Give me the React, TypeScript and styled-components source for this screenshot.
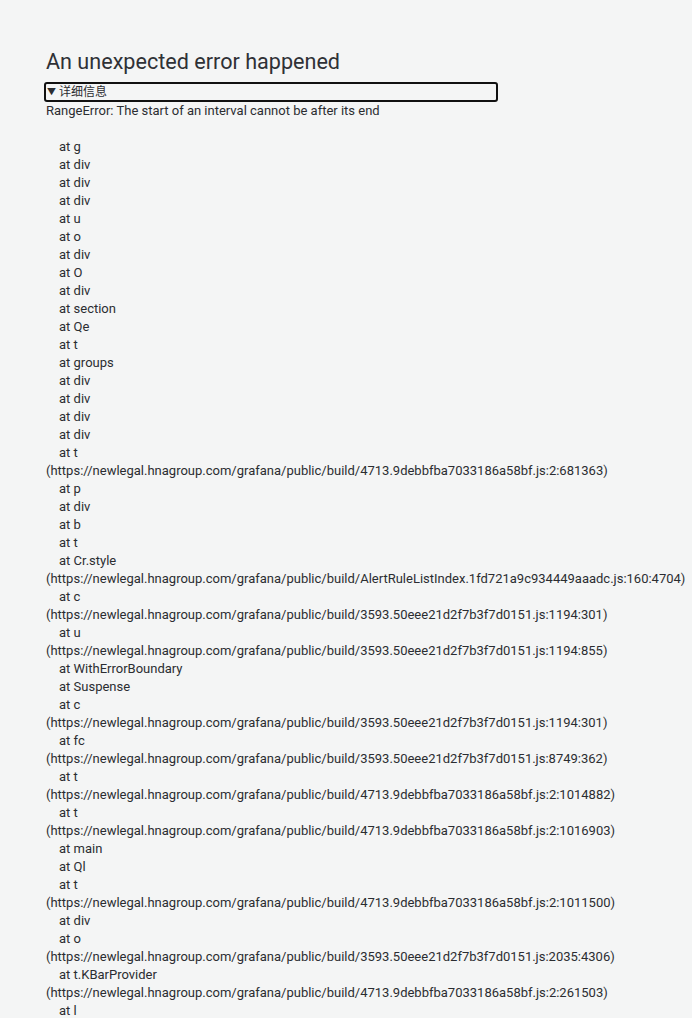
import React from "react";
import styled, { createGlobalStyle } from "styled-components";

const Global = createGlobalStyle`
  html, body { margin: 0; padding: 0; background: #ffffff; }
  body { font-family: Roboto, "Noto Sans CJK SC", sans-serif; }
`;

const Page = styled.div`
  height: 1018px;
  background: #f4f5f5;
  padding: 48px 0 0 46px;
  box-sizing: border-box;
  overflow: hidden;
  color: #2b2d31;
`;

const Title = styled.h2`
  margin: 0 0 6px 0;
  font-size: 21.6px;
  font-weight: 400;
  line-height: 28px;
  color: #2f3136;
`;

const Details = styled.div`
  font-size: 13px;
  line-height: 18px;
  width: 646px;
`;

const Summary = styled.div`
  width: 449px;
  height: 16px;
  line-height: 16px;
  margin-left: -2px;
  padding-left: 1px;
  border: 2px solid #111;
  border-radius: 3px;
  font-size: 12px;
  display: flex;
  align-items: center;
  gap: 3px;
  font-family: Roboto, "Noto Sans CJK SC", sans-serif;
`;

const Tri = styled.span`
  font-size: 9px;
`;

const Line = styled.div<{ $indent?: boolean }>`
  padding-left: ${(p) => (p.$indent ? "13px" : "0")};
  white-space: nowrap;
  height: 18px;
`;

const B = "(https://newlegal.hnagroup.com/grafana/public/build/";

const lines: [string, boolean][] = [
  ["RangeError: The start of an interval cannot be after its end", false],
  ["", false],
  ["at g", true],
  ["at div", true],
  ["at div", true],
  ["at div", true],
  ["at u", true],
  ["at o", true],
  ["at div", true],
  ["at O", true],
  ["at div", true],
  ["at section", true],
  ["at Qe", true],
  ["at t", true],
  ["at groups", true],
  ["at div", true],
  ["at div", true],
  ["at div", true],
  ["at div", true],
  ["at t", true],
  [B + "4713.9debbfba7033186a58bf.js:2:681363)", false],
  ["at p", true],
  ["at div", true],
  ["at b", true],
  ["at t", true],
  ["at Cr.style", true],
  [B + "AlertRuleListIndex.1fd721a9c934449aaadc.js:160:4704)", false],
  ["at c", true],
  [B + "3593.50eee21d2f7b3f7d0151.js:1194:301)", false],
  ["at u", true],
  [B + "3593.50eee21d2f7b3f7d0151.js:1194:855)", false],
  ["at WithErrorBoundary", true],
  ["at Suspense", true],
  ["at c", true],
  [B + "3593.50eee21d2f7b3f7d0151.js:1194:301)", false],
  ["at fc", true],
  [B + "3593.50eee21d2f7b3f7d0151.js:8749:362)", false],
  ["at t", true],
  [B + "4713.9debbfba7033186a58bf.js:2:1014882)", false],
  ["at t", true],
  [B + "4713.9debbfba7033186a58bf.js:2:1016903)", false],
  ["at main", true],
  ["at Ql", true],
  ["at t", true],
  [B + "4713.9debbfba7033186a58bf.js:2:1011500)", false],
  ["at div", true],
  ["at o", true],
  [B + "3593.50eee21d2f7b3f7d0151.js:2035:4306)", false],
  ["at t.KBarProvider", true],
  [B + "4713.9debbfba7033186a58bf.js:2:261503)", false],
  ["at l", true],
];

export default function App() {
  return (
    <>
      <Global />
      <Page>
        <Title>An unexpected error happened</Title>
        <Details>
          <Summary>
            <Tri>▼</Tri>
            <span>详细信息</span>
          </Summary>
          {lines.map(([t, ind], i) => (
            <Line key={i} $indent={ind}>
              {t}
            </Line>
          ))}
        </Details>
      </Page>
    </>
  );
}
